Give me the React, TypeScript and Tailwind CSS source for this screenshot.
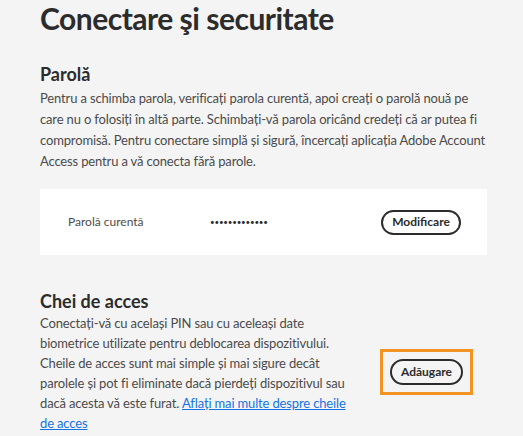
export default function App() {
  return (
    <div className="w-[523px] h-[436px] overflow-hidden bg-[#f4f4f4] text-[#2c2c2c]" style={{ fontFamily: 'Lato, "Open Sans", sans-serif' }}>
      <div className="pl-[40px] pr-[35px]">
        <h1 className="text-[30px] leading-[36px] font-bold text-[#2c2c2c] pt-[0px] tracking-[-0.5px]">Conectare şi securitate</h1>
        <h2 className="mt-[26px] text-[18px] leading-[24px] font-bold text-[#2c2c2c]">Parolă</h2>
        <p className="mt-[2px] text-[13px] leading-[21px] text-[#4b4b4b] tracking-[-0.15px]">
          Pentru a schimba parola, verificați parola curentă, apoi creați o parolă nouă pe care nu o folosiți în altă parte. Schimbați-vă parola oricând credeți că ar putea fi compromisă. Pentru conectare simplă și sigură, încercați aplicația Adobe Account Access pentru a vă conecta fără parole.
        </p>
        <div className="mt-[17px] w-[447px] h-[66px] bg-white flex items-center pl-[28px] pr-[26px]">
          <span className="w-[142px] text-[12px] text-[#4b4b4b]">Parolă curentă</span>
          <span className="text-[8px] text-[#2c2c2c] tracking-[-0.2px]">•••••••••••••</span>
          <button className="ml-auto h-[25px] w-[80px] rounded-full border-2 border-[#2c2c2c] text-[12px] font-bold text-[#2c2c2c]">Modificare</button>
        </div>
        <div className="mt-[34px] flex items-center">
          <div className="w-[306px]">
            <h2 className="text-[18px] leading-[24px] font-bold text-[#2c2c2c]">Chei de acces</h2>
            <p className="mt-[0px] text-[13px] leading-[20px] text-[#4b4b4b] tracking-[-0.15px]">
              Conectați-vă cu același PIN sau cu aceleași date biometrice utilizate pentru deblocarea dispozitivului. Cheile de acces sunt mai simple și mai sigure decât parolele și pot fi eliminate dacă pierdeți dispozitivul sau dacă acesta vă este furat.{' '}
              <a className="text-[#1473e6] underline">Aflați mai multe despre cheile de acces</a>
            </p>
          </div>
          <div className="ml-[34px] mt-[22px] border-[3px] border-[#f29423] w-[93px] h-[46px] flex items-center justify-center">
            <button className="h-[26px] w-[73px] rounded-full border-2 border-[#2c2c2c] text-[12px] font-bold text-[#2c2c2c]">Adăugare</button>
          </div>
        </div>
      </div>
    </div>
  );
}
